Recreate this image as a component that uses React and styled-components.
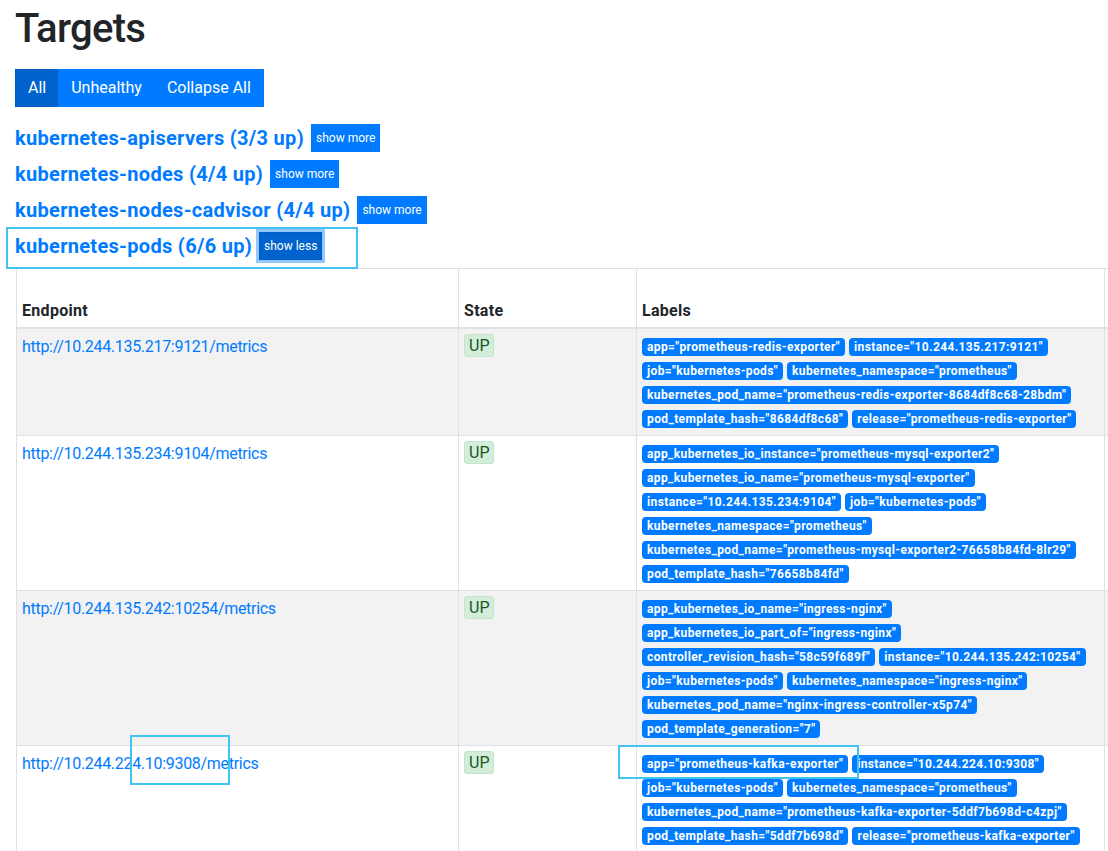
import React from "react";
import styled, { createGlobalStyle } from "styled-components";

const Global = createGlobalStyle`
  html, body { margin: 0; padding: 0; overflow: hidden; background: #fff; }
  body {
    font-family: "Segoe UI", Roboto, "Noto Sans", sans-serif;
    font-size: 16px;
    line-height: 1.5;
    color: #212529;
  }
  * { box-sizing: border-box; }
`;

const Page = styled.div`
  position: relative;
  padding: 0 15px;
  overflow: hidden;
`;

const Title = styled.h1`
  margin: 5px 0 16px;
  font-size: 40px;
  font-weight: 500;
  line-height: 1.2;
  letter-spacing: -0.7px;
`;

const ButtonGroup = styled.div`
  display: inline-flex;
`;

const GroupButton = styled.button`
  font: inherit;
  font-size: 16px;
  line-height: 24px;
  padding: 6px 12px;
  border: 1px solid ${(p) => (p.$active ? "#005cbf" : "#007bff")};
  background: ${(p) => (p.$active ? "#0062cc" : "#007bff")};
  color: #fff;
  border-radius: 0;
  cursor: pointer;
  & + & { margin-left: -1px; }
`;

const JobList = styled.div`
  margin-top: 17px;
  display: flex;
  flex-direction: column;
  gap: 8px;
`;

const JobRow = styled.div`
  display: flex;
  align-items: center;
  height: 28px;
  gap: 7px;
`;

const JobLink = styled.a`
  font-size: 20px;
  font-weight: 700;
  line-height: 24px;
  letter-spacing: 0.3px;
  color: #007bff;
  text-decoration: none;
  white-space: nowrap;
`;

const SmallButton = styled.button`
  font: inherit;
  font-size: 12px;
  line-height: 18px;
  padding: 4px 4px;
  border: 1px solid ${(p) => (p.$focused ? "#005cbf" : "#007bff")};
  background: ${(p) => (p.$focused ? "#0062cc" : "#007bff")};
  color: #fff;
  border-radius: 0;
  white-space: nowrap;
  box-shadow: ${(p) => (p.$focused ? "0 0 0 3px rgba(38,143,255,0.5)" : "none")};
`;

const Table = styled.table`
  margin-top: 8px;
  margin-left: 1px;
  border-collapse: collapse;
  table-layout: fixed;
  width: 1300px;
  border: 1px solid #dee2e6;
`;

const Th = styled.th`
  text-align: left;
  vertical-align: bottom;
  font-weight: 700;
  letter-spacing: 0.3px;
  padding: 5px 5px 4px;
  height: 59px;
  border: 1px solid #dee2e6;
  border-bottom: 2px solid #dee2e6;
  white-space: nowrap;
`;

const Tr = styled.tr`
  background: ${(p) => (p.$striped ? "#f2f2f2" : "#fff")};
`;

const Td = styled.td`
  vertical-align: top;
  padding: 5px;
  border: 1px solid #dee2e6;
`;

const EndpointLink = styled.a`
  display: inline-block;
  padding-top: 1px;
  color: #007bff;
  text-decoration: none;
  white-space: nowrap;
  letter-spacing: -0.3px;
`;

const StateBadge = styled.span`
  display: inline-block;
  padding: 0 4px;
  line-height: 21px;
  font-size: 16px;
  color: #155724;
  background: #d4edda;
  border: 1px solid #c3e6cb;
  border-radius: 3px;
`;

const LabelLine = styled.div`
  display: flex;
  gap: 4px;
  height: 24px;
  padding-top: 4px;
  white-space: nowrap;
`;

const Label = styled.span`
  display: inline-block;
  font-size: 12px;
  font-weight: 700;
  line-height: 12px;
  letter-spacing: 0.38px;
  padding: 3px 5px;
  height: 18px;
  color: #fff;
  background: #007bff;
  border-radius: 4px;
`;

const Note = styled.div`
  position: absolute;
  border: 2px solid #40c4f4;
  pointer-events: none;
`;

const jobs = [
  { name: "kubernetes-apiservers (3/3 up)", btn: "show more" },
  { name: "kubernetes-nodes (4/4 up)", btn: "show more" },
  { name: "kubernetes-nodes-cadvisor (4/4 up)", btn: "show more" },
  { name: "kubernetes-pods (6/6 up)", btn: "show less", focused: true },
];

const targets = [
  {
    url: "http://10.244.135.217:9121/metrics",
    lines: [
      ['app="prometheus-redis-exporter"', 'instance="10.244.135.217:9121"'],
      ['job="kubernetes-pods"', 'kubernetes_namespace="prometheus"'],
      ['kubernetes_pod_name="prometheus-redis-exporter-8684df8c68-28bdm"'],
      ['pod_template_hash="8684df8c68"', 'release="prometheus-redis-exporter"'],
    ],
  },
  {
    url: "http://10.244.135.234:9104/metrics",
    lines: [
      ['app_kubernetes_io_instance="prometheus-mysql-exporter2"'],
      ['app_kubernetes_io_name="prometheus-mysql-exporter"'],
      ['instance="10.244.135.234:9104"', 'job="kubernetes-pods"'],
      ['kubernetes_namespace="prometheus"'],
      ['kubernetes_pod_name="prometheus-mysql-exporter2-76658b84fd-8lr29"'],
      ['pod_template_hash="76658b84fd"'],
    ],
  },
  {
    url: "http://10.244.135.242:10254/metrics",
    lines: [
      ['app_kubernetes_io_name="ingress-nginx"'],
      ['app_kubernetes_io_part_of="ingress-nginx"'],
      ['controller_revision_hash="58c59f689f"', 'instance="10.244.135.242:10254"'],
      ['job="kubernetes-pods"', 'kubernetes_namespace="ingress-nginx"'],
      ['kubernetes_pod_name="nginx-ingress-controller-x5p74"'],
      ['pod_template_generation="7"'],
    ],
  },
  {
    url: "http://10.244.224.10:9308/metrics",
    lines: [
      ['app="prometheus-kafka-exporter"', 'instance="10.244.224.10:9308"'],
      ['job="kubernetes-pods"', 'kubernetes_namespace="prometheus"'],
      ['kubernetes_pod_name="prometheus-kafka-exporter-5ddf7b698d-c4zpj"'],
      ['pod_template_hash="5ddf7b698d"', 'release="prometheus-kafka-exporter"'],
    ],
  },
];

export default function App() {
  return (
    <Page>
      <Global />
      <Title>Targets</Title>
      <ButtonGroup>
        <GroupButton $active>All</GroupButton>
        <GroupButton>Unhealthy</GroupButton>
        <GroupButton>Collapse All</GroupButton>
      </ButtonGroup>
      <JobList>
        {jobs.map((j) => (
          <JobRow key={j.name}>
            <JobLink href="#">{j.name}</JobLink>
            <SmallButton $focused={j.focused}>{j.btn}</SmallButton>
          </JobRow>
        ))}
      </JobList>
      <Table>
        <colgroup>
          <col style={{ width: 442 }} />
          <col style={{ width: 178 }} />
          <col style={{ width: 468 }} />
          <col />
        </colgroup>
        <thead>
          <tr>
            <Th>Endpoint</Th>
            <Th>State</Th>
            <Th>Labels</Th>
            <Th />
          </tr>
        </thead>
        <tbody>
          {targets.map((t, i) => (
            <Tr key={t.url} $striped={i % 2 === 0}>
              <Td>
                <EndpointLink href="#">{t.url}</EndpointLink>
              </Td>
              <Td>
                <StateBadge>UP</StateBadge>
              </Td>
              <Td>
                {t.lines.map((line, k) => (
                  <LabelLine key={k}>
                    {line.map((l) => (
                      <Label key={l}>{l}</Label>
                    ))}
                  </LabelLine>
                ))}
              </Td>
              <Td />
            </Tr>
          ))}
        </tbody>
      </Table>
      <Note style={{ left: 6, top: 227, width: 352, height: 42 }} />
      <Note style={{ left: 130, top: 735, width: 100, height: 50 }} />
      <Note style={{ left: 618, top: 745, width: 241, height: 34 }} />
    </Page>
  );
}
